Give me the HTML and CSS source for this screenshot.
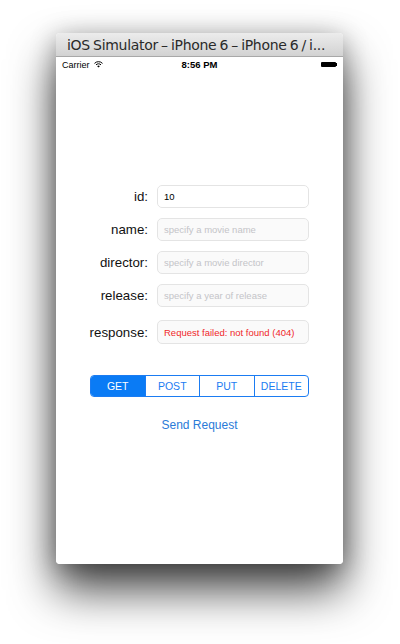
FILE: index.html
```html
<!DOCTYPE html>
<html lang="en">
<head>
  <meta charset="UTF-8" />
  <meta name="viewport" content="width=device-width, initial-scale=1.0" />
  <title>iOS Simulator</title>
  <link rel="stylesheet" href="styles.css">
</head>
<body>
  <div class="window">
    <div class="titlebar">iOS Simulator – iPhone 6 – iPhone 6 / i...</div>
    <div class="screen">
      <div class="statusbar">
        <span class="carrier">Carrier
          <svg class="wifi" width="9" height="7" viewBox="0 0 9 7">
            <path d="M0.5 2.4 A5.5 5.5 0 0 1 8.5 2.4" fill="none" stroke="#000" stroke-width="1"/>
            <path d="M2 3.9 A3.4 3.4 0 0 1 7 3.9" fill="none" stroke="#000" stroke-width="1"/>
            <path d="M4.5 6.6 L3.2 5.2 A1.8 1.8 0 0 1 5.8 5.2 Z" fill="#000"/>
          </svg>
        </span>
        <span class="clock">8:56 PM</span>
        <span class="battery"><span class="battery-body"></span><span class="battery-tip"></span></span>
      </div>

      <div class="form">
        <div class="row">
          <label>id:</label>
          <div class="field">10</div>
        </div>
        <div class="row">
          <label>name:</label>
          <div class="field placeholder">specify a movie name</div>
        </div>
        <div class="row">
          <label>director:</label>
          <div class="field placeholder">specify a movie director</div>
        </div>
        <div class="row">
          <label>release:</label>
          <div class="field placeholder">specify a year of release</div>
        </div>
        <div class="row response">
          <label>response:</label>
          <div class="field error">Request failed: not found (404)</div>
        </div>
      </div>

      <div class="segments">
        <span class="seg active">GET</span>
        <span class="seg">POST</span>
        <span class="seg">PUT</span>
        <span class="seg">DELETE</span>
      </div>

      <div class="send">Send Request</div>
    </div>
  </div>
</body>
</html>
```

FILE: styles.css
```css
html, body { height: 644px; }
body { margin: 0; background: #fff; font-family: "Liberation Sans", Arial, sans-serif; overflow: hidden; }

.window {
  width: 287px;
  margin: 33px 0 0 56px;
  border-radius: 4px;
  box-shadow: 0 26px 46px rgba(0, 0, 0, 0.72), 0 4px 26px rgba(0, 0, 0, 0.3);
}

.titlebar {
  height: 24px;
  line-height: 25px;
  padding-left: 11px;
  border-radius: 4px 4px 0 0;
  background: linear-gradient(#ececec, #d2d2d2);
  border-bottom: 1px solid #a8a8a8;
  box-sizing: border-box;
  font-family: "DejaVu Sans", sans-serif;
  font-size: 14px;
  letter-spacing: -0.3px;
  word-spacing: -1px;
  color: #2a2a2a;
  white-space: nowrap;
  overflow: hidden;
}

.screen {
  height: 507px;
  background: #fff;
  border-radius: 0 0 4px 4px;
  overflow: hidden;
}

.statusbar {
  display: flex;
  justify-content: space-between;
  align-items: center;
  height: 15px;
  padding: 0 6px 0 6px;
  font-size: 9px;
  color: #000;
}
.carrier { display: flex; align-items: center; gap: 4px; width: 80px; }
.clock { font-weight: bold; font-size: 9.5px; }
.battery { display: flex; align-items: center; width: 80px; justify-content: flex-end; }
.battery-body { width: 15px; height: 5px; background: #000; border-radius: 1px; }
.battery-tip { width: 1px; height: 3px; background: #000; }

.form {
  display: flex;
  flex-direction: column;
  gap: 10px;
  margin-top: 113px;
}
.row { display: flex; align-items: center; height: 23px; }
.row.response { margin-top: 3px; height: 24px; }
.row label {
  width: 92px;
  text-align: right;
  font-size: 13.3px;
  color: #111;
  padding-right: 9px;
}
.field {
  width: 152px;
  height: 100%;
  box-sizing: border-box;
  border: 1px solid #e4e4e4;
  border-radius: 5px;
  padding-left: 6px;
  display: flex;
  align-items: center;
  font-size: 9.5px;
  color: #000;
}
.field.placeholder { color: #c4c4c8; background: #fafafa; }
.field.error { color: #f0282a; background: #fafafa; }

.segments {
  display: flex;
  margin: 31px 0 0 34px;
  width: 219px;
  height: 22px;
  border: 1px solid #1b7cf2;
  border-radius: 4px;
  box-sizing: border-box;
  overflow: hidden;
}
.seg {
  flex: 1;
  display: flex;
  align-items: center;
  justify-content: center;
  font-size: 10.5px;
  color: #1b7cf2;
  border-left: 1px solid #1b7cf2;
}
.seg:first-child { border-left: none; }
.seg.active { background: #0a7bf5; color: #fff; }

.send {
  text-align: center;
  margin-top: 21px;
  font-size: 12px;
  color: #2a7bd8;
}
```
